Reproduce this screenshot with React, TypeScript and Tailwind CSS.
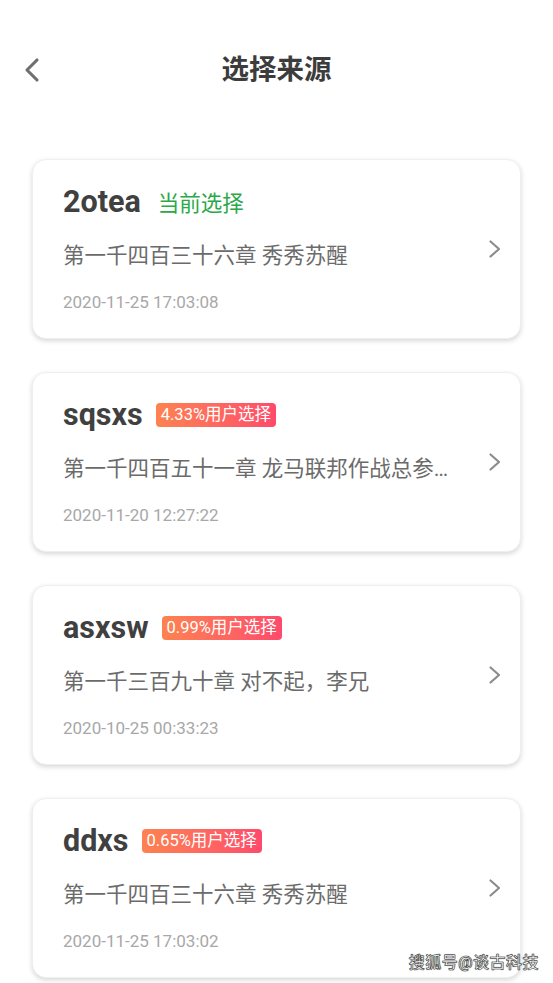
import { ChevronLeft } from 'lucide-react';

type Source = {
  name: string;
  chapter: string;
  time: string;
  current?: boolean;
  share?: string;
};

const sources: Source[] = [
  { name: '2otea', chapter: '第一千四百三十六章 秀秀苏醒', time: '2020-11-25 17:03:08', current: true },
  { name: 'sqsxs', chapter: '第一千四百五十一章 龙马联邦作战总参谋部', time: '2020-11-20 12:27:22', share: '4.33%' },
  { name: 'asxsw', chapter: '第一千三百九十章 对不起，李兄', time: '2020-10-25 00:33:23', share: '0.99%' },
  { name: 'ddxs', chapter: '第一千四百三十六章 秀秀苏醒', time: '2020-11-25 17:03:02', share: '0.65%' },
];

function Arrow() {
  return (
    <svg width="14" height="20" viewBox="0 0 14 20" className="ml-[10px] shrink-0">
      <polyline points="2.5,2.5 11,10 2.5,17.5" fill="none" stroke="#8c8c8c" strokeWidth="2.2" strokeLinecap="round" strokeLinejoin="round" />
    </svg>
  );
}

function SourceCard({ s }: { s: Source }) {
  return (
    <div className="flex items-center rounded-[14px] border border-[#efefef] bg-white pl-[30px] pr-[18px] pt-[25px] pb-[25px] shadow-[0_2px_5px_rgba(0,0,0,0.16)]">
      <div className="min-w-0 flex-1">
        <div className="flex h-[34px] items-center">
          <span className="text-[30.5px] font-bold leading-none text-[#404040]">{s.name}</span>
          {s.current ? (
            <span className="ml-[17px] mt-[4px] text-[21.5px] leading-none text-[#2ba84a]">当前选择</span>
          ) : (
            <span className="ml-[13px] rounded-[4px] bg-gradient-to-r from-[#fd8250] to-[#fe4a6b] px-[5px] py-[3px] text-[16.5px] leading-[18px] text-white">
              {s.share}用户选择
            </span>
          )}
        </div>
        <div className="mt-[22px] h-[30px] truncate pr-[24px] text-[21.5px] leading-[30px] text-[#6b6b6b]">{s.chapter}</div>
        <div className="mt-[20px] h-[22px] text-[17px] leading-[22px] text-[#a8a8a8]">{s.time}</div>
      </div>
      <Arrow />
    </div>
  );
}

export default function App() {
  return (
    <div
      className="relative h-[983px] w-[553px] overflow-hidden bg-white"
      style={{ fontFamily: 'Roboto, "Noto Sans CJK SC", sans-serif' }}
    >
      {/* Header */}
      <div className="relative flex h-[140px] items-start justify-center pt-[52px]">
        <ChevronLeft size={40} strokeWidth={1.9} className="absolute left-[12px] top-[50px] text-[#6f6f6f]" />
        <h1 className="text-[27.5px] font-bold leading-[36px] text-[#3c3c3c]">选择来源</h1>
      </div>

      {/* Source list */}
      <div className="mt-[19px] flex flex-col gap-[33px] pl-[32px] pr-[32px]">
        {sources.map((s) => (
          <SourceCard key={s.name} s={s} />
        ))}
      </div>

      {/* Watermark */}
      <div
        className="absolute bottom-[8px] right-[14px] text-[16px] font-medium tracking-[0.5px] text-white"
        style={{ WebkitTextStroke: '0.5px #333', textShadow: '0 0 1px #000' }}
      >
        搜狐号@谈古科技
      </div>
    </div>
  );
}
